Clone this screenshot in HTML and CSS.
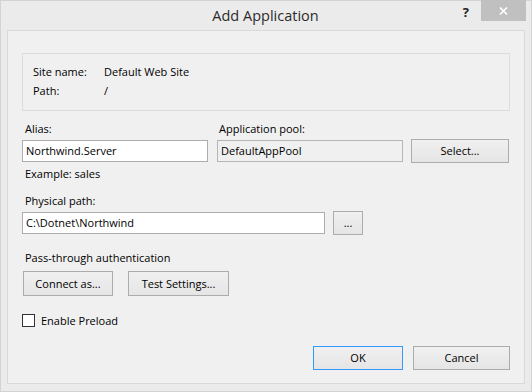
FILE: index.html
```html
<!DOCTYPE html>
<html>
<head>
<meta charset="utf-8">
<link rel="stylesheet" href="styles.css">
</head>
<body>
<div class="window">
  <div class="titlebar">
    <div class="title">Add Application</div>
    <div class="controls">
      <span class="help">?</span>
      <span class="close"><svg width="9" height="8" viewBox="0 0 9 8"><path d="M1 0.5 L8 7.5 M8 0.5 L1 7.5" stroke="#fff" stroke-width="1.6" fill="none"/></svg></span>
    </div>
  </div>
  <div class="frame">
    <div class="sitebox">
      <div class="siterow"><span class="sitelabel">Site name:</span><span>Default Web Site</span></div>
      <div class="siterow"><span class="sitelabel">Path:</span><span>/</span></div>
    </div>
    <div class="grid">
      <div class="label lab-alias">Alias:</div>
      <div class="label lab-pool">Application pool:</div>
      <div></div>
      <div class="input">Northwind.Server</div>
      <div class="input disabled">DefaultAppPool</div>
      <div class="btn">Select...</div>
    </div>
    <div class="label example">Example: sales</div>
    <div class="label phys">Physical path:</div>
    <div class="pathrow">
      <div class="input pathinput">C:\Dotnet\Northwind</div>
      <div class="btn dots">...</div>
    </div>
    <div class="label pass">Pass-through authentication</div>
    <div class="btnrow">
      <div class="btn connect">Connect as...</div>
      <div class="btn test">Test Settings...</div>
    </div>
    <div class="checkrow">
      <span class="checkbox"></span>
      <span>Enable Preload</span>
    </div>
    <div class="footer">
      <div class="btn ok">OK</div>
      <div class="btn cancel">Cancel</div>
    </div>
  </div>
</div>
</body>
</html>
```
FILE: styles.css
```css
html, body {
  margin: 0;
  padding: 0;
  background: #ebebeb;
}
body {
  font-family: "Open Sans", "Noto Sans", sans-serif;
  font-size: 11px;
  color: #000;
}
.window {
  width: 532px;
  height: 392px;
  box-sizing: border-box;
  border: 1px solid #d3d3d3;
  background: #ebebeb;
  display: flex;
  flex-direction: column;
}
.titlebar {
  height: 29px;
  display: grid;
  grid-template-columns: 1fr auto 1fr;
  align-items: start;
}
.title {
  grid-column: 2;
  font-size: 14.5px;
  color: #2b2b2b;
  line-height: 18px;
  margin-top: 6px;
  margin-left: -1px;
}
.controls {
  grid-column: 3;
  justify-self: end;
  display: flex;
  align-items: flex-start;
  margin-top: -1px;
  margin-right: 5px;
}
.help {
  font-weight: bold;
  font-size: 13px;
  color: #222;
  line-height: 14px;
  margin-top: 5px;
  margin-right: 12px;
}
.close {
  width: 45px;
  height: 21px;
  background: #c0c0c0;
  display: flex;
  align-items: center;
  justify-content: center;
}
.frame {
  flex: 1;
  margin: 0 6px 7px 6px;
  border: 1px solid #d9d9d9;
  background: #f0f0f0;
  padding: 22px 14px 0 14px;
  display: flex;
  flex-direction: column;
}
.sitebox {
  border: 1px solid #dcdcdc;
  padding: 8px 10px 10px 10px;
  box-sizing: content-box;
  height: 38px;
}
.siterow {
  display: flex;
  height: 19px;
  line-height: 19px;
}
.sitelabel {
  width: 71px;
}
.label {
  line-height: 16px;
  height: 16px;
}
.grid {
  display: grid;
  grid-template-columns: 186px 186px 97px;
  column-gap: 9px;
  row-gap: 2px;
  margin-top: 10px;
  align-items: center;
}
.grid .btn {
  margin-left: -1px;
}
.lab-alias { padding-left: 3px; }
.lab-pool { padding-left: 2px; }
.input {
  box-sizing: border-box;
  height: 22px;
  border: 1px solid #abadb3;
  background: #fff;
  line-height: 20px;
  padding-left: 3px;
}
.input.disabled {
  background: #f0f0f0;
  border-color: #b5b5b5;
}
.btn {
  box-sizing: border-box;
  height: 24px;
  border: 1px solid #acacac;
  background: linear-gradient(#f0f0f0, #e5e5e5);
  text-align: center;
  line-height: 22px;
}
.example {
  margin-top: 3px;
  padding-left: 3px;
}
.phys {
  margin-top: 11px;
  padding-left: 3px;
}
.pathrow {
  display: flex;
  align-items: center;
  margin-top: 2px;
  gap: 8px;
}
.pathinput {
  width: 303px;
}
.dots {
  width: 30px;
}
.pass {
  margin-top: 15px;
  padding-left: 3px;
}
.btnrow {
  display: flex;
  gap: 15px;
  margin-top: 5px;
}
.btnrow .btn {
  height: 25px;
  line-height: 23px;
}
.connect { width: 90px; margin-left: 1px; }
.test { width: 101px; }
.checkrow {
  display: flex;
  align-items: center;
  margin-top: 16px;
  height: 16px;
  gap: 6px;
}
.checkbox {
  width: 13px;
  height: 13px;
  box-sizing: border-box;
  border: 1px solid #333;
  background: #fff;
}
.footer {
  display: flex;
  justify-content: flex-end;
  gap: 10px;
  margin-top: 18px;
}
.ok {
  width: 90px;
  border-color: #3399ff;
}
.cancel {
  width: 97px;
}
```
